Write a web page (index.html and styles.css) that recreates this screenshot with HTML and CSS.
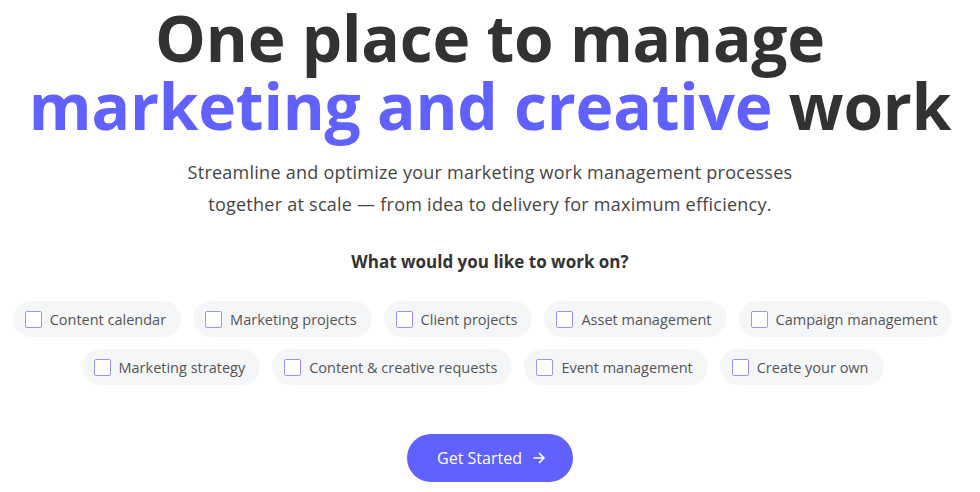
FILE: index.html
```html
<!DOCTYPE html>
<html lang="en">
<head>
<meta charset="utf-8">
<title>One place to manage marketing and creative work</title>
<link rel="stylesheet" href="styles.css">
</head>
<body>
<main class="hero">
  <h1 class="title">One place to manage<br><span class="accent">marketing and creative</span> work</h1>
  <p class="lead">Streamline and optimize your marketing work management processes<br>together at scale — from idea to delivery for maximum efficiency.</p>
  <h2 class="question">What would you like to work on?</h2>
  <div class="chips">
    <div class="row">
      <label class="chip"><span class="box"></span>Content calendar</label>
      <label class="chip"><span class="box"></span>Marketing projects</label>
      <label class="chip"><span class="box"></span>Client projects</label>
      <label class="chip"><span class="box"></span>Asset management</label>
      <label class="chip"><span class="box"></span>Campaign management</label>
    </div>
    <div class="row">
      <label class="chip"><span class="box"></span>Marketing strategy</label>
      <label class="chip"><span class="box"></span>Content &amp; creative requests</label>
      <label class="chip"><span class="box"></span>Event management</label>
      <label class="chip"><span class="box"></span>Create your own</label>
    </div>
  </div>
  <a class="cta" href="#">Get Started
    <svg class="arrow" width="14" height="14" viewBox="0 0 14 14" fill="none" stroke="currentColor" stroke-width="1.7" stroke-linecap="round" stroke-linejoin="round"><path d="M2 7h10M7.5 2.5 12 7 7.5 11.5"/></svg>
  </a>
</main>
</body>
</html>
```

FILE: styles.css
```css
* { box-sizing: border-box; }
html, body { margin: 0; padding: 0; background: #fff; }
body {
  font-family: "Open Sans", "Noto Sans", sans-serif;
  color: #333;
}
.hero {
  display: flex;
  flex-direction: column;
  align-items: center;
  padding-top: 4px;
}
.title {
  margin: 0;
  font-size: 64px;
  line-height: 68px;
  font-weight: 700;
  text-align: center;
  color: #323232;
  letter-spacing: -0.2px;
}
.accent { color: #6161ff; }
.lead {
  margin: 16px 0 0;
  font-size: 18px;
  line-height: 32px;
  letter-spacing: 0.25px;
  text-align: center;
  color: #454545;
}
.question {
  margin: 30px 0 0;
  font-size: 17px;
  line-height: 24px;
  font-weight: 700;
  color: #333;
}
.chips {
  margin-top: 27px;
  padding-right: 15px;
  display: flex;
  flex-direction: column;
  gap: 12px;
  align-items: center;
}
.row {
  display: flex;
  gap: 12px;
}
.chip {
  display: flex;
  align-items: center;
  gap: 8px;
  height: 36px;
  padding: 0 15px 0 12px;
  background: #f5f6f8;
  border-radius: 18px;
  font-size: 14.5px;
  color: #555;
  white-space: nowrap;
}
.box {
  width: 17px;
  height: 17px;
  border: 1.5px solid #9a94ff;
  border-radius: 2px;
  background: #fff;
}
.cta {
  margin-top: 49px;
  display: flex;
  align-items: center;
  gap: 10px;
  height: 48px;
  padding: 0 27px 0 30px;
  border-radius: 24px;
  background: #6161ff;
  color: #fff;
  font-size: 16px;
  text-decoration: none;
}
.arrow { display: block; }
```
